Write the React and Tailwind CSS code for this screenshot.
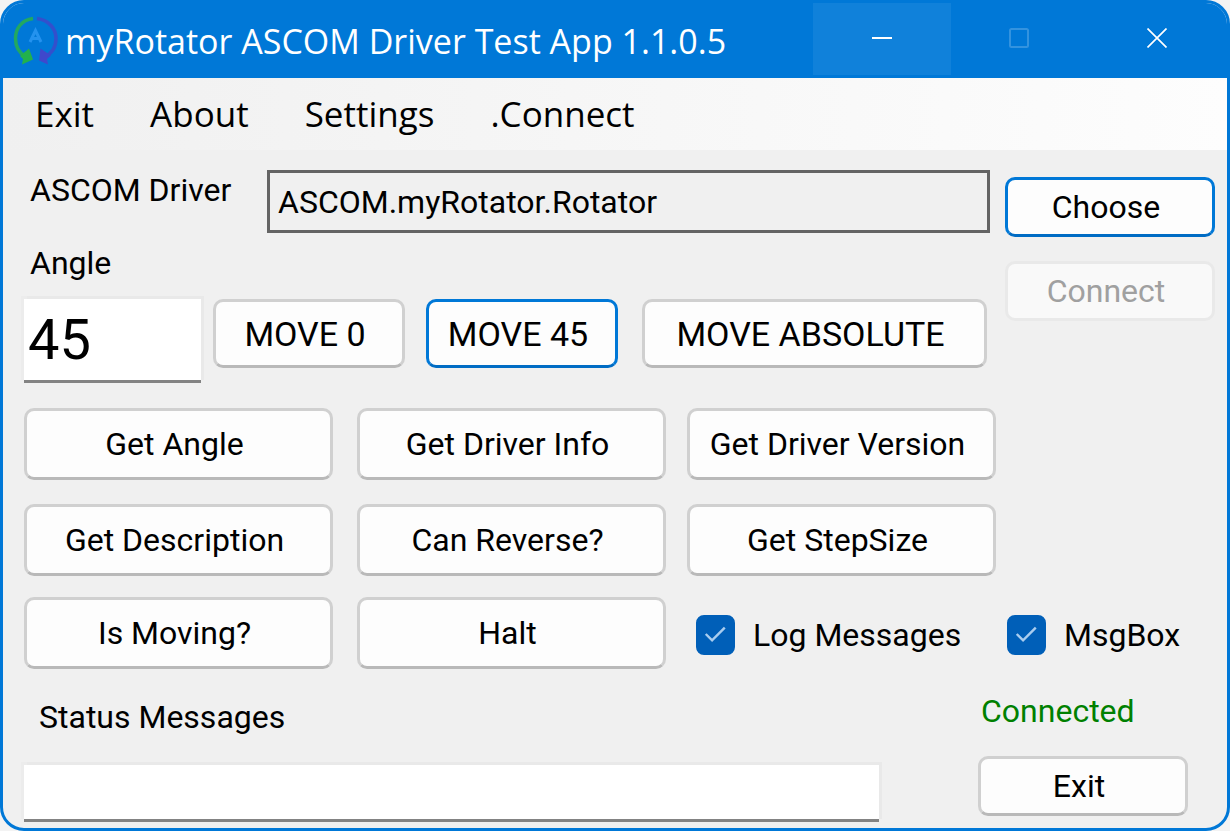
import React, { useState } from "react";

const menuItems = ["Exit", "About", "Settings", ".Connect"];

function Button({ className = "", children, ...props }) {
  return (
    <button
      type="button"
      className={`rounded-[10px] border-3 border-[#d0d0d0] border-b-[#b9b9b9] bg-[#fdfdfd] pr-2 whitespace-nowrap disabled:border-[#e9e9e9] disabled:bg-[#f9f9f9] disabled:text-[#a0a0a0] aria-pressed:border-[#0078d7] aria-pressed:border-b-[#006cc4] ${className}`}
      {...props}
    >
      {children}
    </button>
  );
}

function TextField({ className = "", ...props }) {
  return (
    <input
      className={`border-b-3 border-[#838383] bg-white shadow-[3px_-3px_0_#e9e9e9,-3px_-3px_0_#ececec] ${className}`}
      {...props}
    />
  );
}

function Checkbox({ id, label, className = "" }) {
  const [checked, setChecked] = useState(true);

  return (
    <div className={`flex items-center gap-[18px] ${className}`}>
      <span className="grid h-10 w-[39px] shrink-0">
        <input
          id={id}
          type="checkbox"
          checked={checked}
          onChange={(e) => setChecked(e.target.checked)}
          className="col-start-1 row-start-1 appearance-none rounded-lg border-3 border-gray-500 bg-white checked:border-[#005fb8] checked:bg-[#005fb8]"
        />
        {checked && (
          <svg
            viewBox="0 0 40 40"
            fill="none"
            className="pointer-events-none col-start-1 row-start-1"
          >
            <path
              d="M10 19.500L16.500 26L29.500 13"
              stroke="#a9cdef"
              strokeWidth="2.500"
            />
          </svg>
        )}
      </span>
      <label htmlFor={id} className="whitespace-nowrap">
        {label}
      </label>
    </div>
  );
}

function Logo() {
  return (
    <svg viewBox="0 0 48 50" fill="none" className="h-[50px] w-12 shrink-0">
      <path
        d="M22 2.500C10 4 4.500 13 4.500 22.500C4.500 31 8 37 15 41"
        stroke="#22a860"
        strokeWidth="3.500"
      />
      <path d="M18 32.500L22 43.500L11 48.500L12 43L9 40Z" fill="#22b14c" />
      <path
        d="M26 2.500C38 4 45 13 45 22.500C45 32 40 38 33 41"
        stroke="#3350cc"
        strokeWidth="3.500"
      />
      <path d="M29.500 32.500L28 44.500L37 48.500L36 43L40 39.500Z" fill="#3f48cc" />
      <path
        d="M19 26L24.500 14.500L30 26M21 22.500H28"
        stroke="#2492ee"
        strokeWidth="3"
      />
    </svg>
  );
}

function TitleBar() {
  return (
    <header className="flex h-[75px] bg-[#0078d7] text-white">
      <div className="flex flex-1 items-center gap-[6px] pl-2">
        <Logo />
        <h1 className="font-['Open_Sans',sans-serif] text-[34px] leading-[48px] whitespace-nowrap">
          myRotator ASCOM Driver Test App 1.1.0.5
        </h1>
      </div>
      <div className="flex h-[72px]">
        <button
          type="button"
          aria-label="Minimize"
          className="flex w-[138px] items-center justify-center bg-[#1081da] pb-0.5"
        >
          <svg viewBox="0 0 20 20" className="h-5 w-5">
            <path d="M0 10H20" stroke="white" strokeWidth="2" />
          </svg>
        </button>
        <button
          type="button"
          aria-label="Maximize"
          disabled
          className="flex w-[138px] items-center justify-center pr-0.5 pb-0.5"
        >
          <svg viewBox="0 0 20 20" fill="none" className="h-5 w-5">
            <rect
              x="1"
              y="1"
              width="18"
              height="18"
              rx="1.500"
              stroke="#3393df"
              strokeWidth="2"
            />
          </svg>
        </button>
        <button
          type="button"
          aria-label="Close"
          className="flex w-[138px] items-center justify-center pr-0.5 pb-0.5"
        >
          <svg viewBox="0 0 20 20" className="h-5 w-5">
            <path
              d="M0.500 0.500L19.500 19.500M19.500 0.500L0.500 19.500"
              stroke="white"
              strokeWidth="1.700"
            />
          </svg>
        </button>
      </div>
    </header>
  );
}

export default function App() {
  const [driver, setDriver] = useState("ASCOM.myRotator.Rotator");
  const [angle, setAngle] = useState("45");
  const [status, setStatus] = useState("");

  return (
    <div className="min-h-screen bg-[#f3f3f3]">
      <div className="flex min-h-screen flex-col overflow-hidden rounded-3xl border-3 border-[#0078d7] bg-[#f0f0f0] font-[Roboto,sans-serif] text-[32px] leading-[40px] text-black">
        <TitleBar />

        <nav className="flex h-[72px] items-center gap-14 bg-linear-to-r from-[#f0f0f0] to-[#fdfdfd] pl-8 font-['Open_Sans',sans-serif] text-[35px]">
          {menuItems.map((item) => (
            <button key={item} type="button">
              {item}
            </button>
          ))}
        </nav>

        <main className="flex-1">
          <section className="flex gap-[15px] pt-5 pr-3">
            <div className="flex-1">
              <div className="flex">
                <label htmlFor="driver" className="w-[264px] pl-[27px]">
                  ASCOM Driver
                </label>
                <input
                  id="driver"
                  value={driver}
                  onChange={(e) => setDriver(e.target.value)}
                  className="h-[63px] min-w-0 flex-1 border-3 border-[#646464] px-2"
                />
              </div>
              <label htmlFor="angle" className="mt-[10px] block pl-[27px]">
                Angle
              </label>
              <div className="mt-4 flex pl-[21px]">
                <TextField
                  id="angle"
                  value={angle}
                  onChange={(e) => setAngle(e.target.value)}
                  className="h-[84px] w-[177px] pl-1 text-[56px]"
                />
                <div className="grid flex-1 grid-cols-[213fr_216fr_345fr] pr-[3px] pl-3 text-[34px]">
                  <Button className="mr-[21px] h-[69px]">MOVE 0</Button>
                  <Button aria-pressed="true" className="mr-6 h-[69px]">
                    MOVE 45
                  </Button>
                  <Button className="h-[69px]">MOVE ABSOLUTE</Button>
                </div>
              </div>
            </div>
            <div className="flex w-[210px] flex-col gap-6 pt-[7px]">
              <Button aria-pressed="true" className="h-[60px]">
                Choose
              </Button>
              <Button disabled className="h-[60px]">
                Connect
              </Button>
            </div>
          </section>

          <section className="mt-[25px] grid grid-cols-[333fr_330fr_320fr_220fr] grid-rows-[96px_93px_72px] items-start pl-[21px]">
            <Button className="mr-6 h-[72px]">Get Angle</Button>
            <Button className="mr-[21px] h-[72px]">Get Driver Info</Button>
            <Button className="mr-[11px] h-[72px]">Get Driver Version</Button>
            <Button className="col-start-1 mr-6 h-[72px]">
              Get Description
            </Button>
            <Button className="mr-[21px] h-[72px]">Can Reverse?</Button>
            <Button className="mr-[11px] h-[72px]">Get StepSize</Button>
            <Button className="col-start-1 mr-6 h-[72px]">Is Moving?</Button>
            <Button className="mr-[21px] h-[72px]">Halt</Button>
            <Checkbox
              id="log"
              label="Log Messages"
              className="h-[75px] pl-[9px]"
            />
            <Checkbox id="msgbox" label="MsgBox" className="h-[75px]" />
          </section>

          <section className="flex justify-between gap-[99px] pt-[22px] pr-[39px] pl-[21px]">
            <div className="flex-1 pt-[6px]">
              <label htmlFor="status" className="block pl-[15px]">
                Status Messages
              </label>
              <TextField
                id="status"
                value={status}
                onChange={(e) => setStatus(e.target.value)}
                className="mt-7 block h-[57px] w-full px-1"
              />
            </div>
            <div className="flex w-[210px] flex-col">
              <p className="pl-[3px] text-[#008000]">Connected</p>
              <Button className="mt-[25px] h-[60px]">Exit</Button>
            </div>
          </section>
        </main>
      </div>
    </div>
  );
}
